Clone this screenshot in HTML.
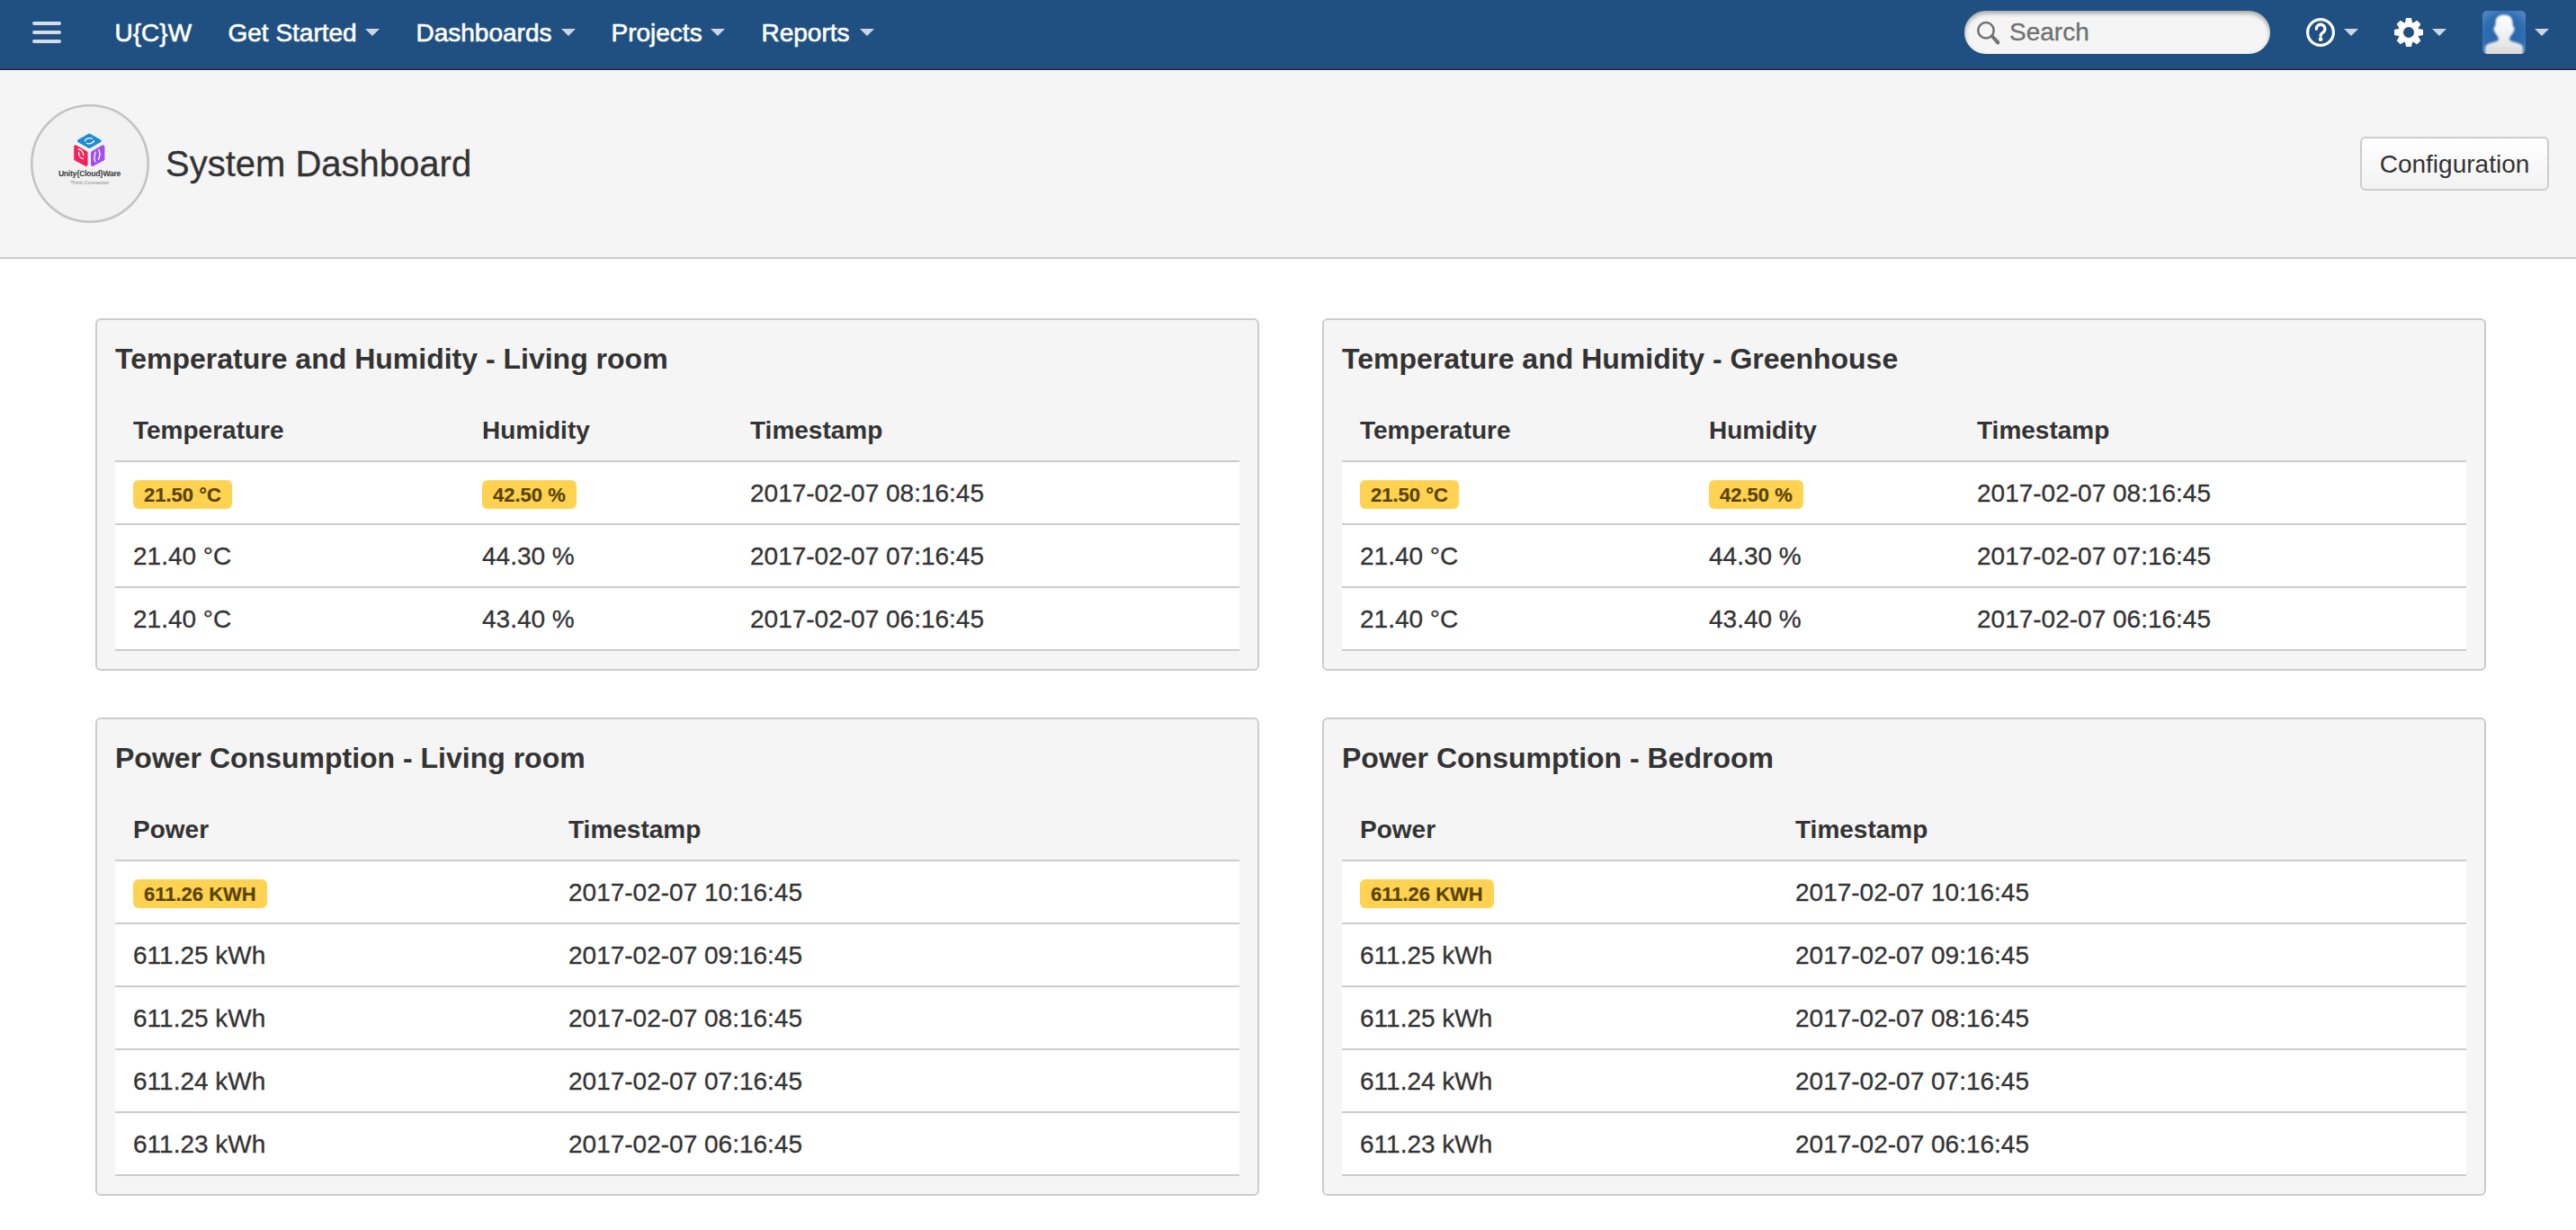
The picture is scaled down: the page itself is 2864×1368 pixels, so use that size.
<!DOCTYPE html>
<html>
<head>
<meta charset="utf-8">
<style>
html,body{margin:0;padding:0;}
body{width:2864px;height:1368px;overflow:hidden;position:relative;background:#fff;font-family:"Liberation Sans",sans-serif;color:#333;}
.abs{position:absolute;}
#hdr{position:absolute;left:0;top:0;width:2864px;height:76px;background:#205081;}
#hdrline{position:absolute;left:0;top:76px;width:2864px;height:1px;background:#2d3b53;}
#hdrline2{position:absolute;left:0;top:77px;width:2864px;height:1px;background:#1f2b45;}
.bar{position:absolute;left:36px;width:32px;height:4px;border-radius:2px;background:#d4dce6;}
.nav{position:absolute;top:17px;height:40px;line-height:40px;font-size:28px;color:#fff;white-space:nowrap;-webkit-text-stroke:0.6px #fff;}
.caret{position:absolute;top:32px;width:0;height:0;border-left:8px solid transparent;border-right:8px solid transparent;border-top:8px solid #ccd5e1;}
#search{position:absolute;left:2184px;top:12px;width:340px;height:48px;border-radius:24px;background:#f5f5f5;box-shadow:inset 0 3px 5px rgba(0,0,0,0.33);}
#stext{position:absolute;left:2234px;top:16px;height:40px;line-height:40px;font-size:28px;color:#707070;-webkit-text-stroke:0.3px #707070;}
#ph{position:absolute;left:0;top:78px;width:2864px;height:208px;background:#f5f5f5;border-top:1px solid #fff;box-sizing:border-box;}
#phb{position:absolute;left:0;top:286px;width:2864px;height:2px;background:#ccc;}
#logo{position:absolute;left:34px;top:116px;width:132px;height:132px;border-radius:50%;background:#f3f3f3;border:3px solid #c4c4c4;box-sizing:border-box;}
#h1{position:absolute;left:184px;top:157px;height:50px;line-height:50px;font-size:40px;color:#333;-webkit-text-stroke:0.3px #333;white-space:nowrap;}
#cfg{position:absolute;left:2624px;top:152px;width:210px;height:60px;box-sizing:border-box;border:2px solid #ccc;border-radius:6px;background:linear-gradient(#fff,#f2f2f2);font-size:28px;line-height:58px;text-align:center;color:#333;}
.panel{position:absolute;width:1294px;box-sizing:border-box;border:2px solid #ccc;border-radius:6px;background:#f5f5f5;}
.ptitle{position:absolute;left:20px;font-size:32px;font-weight:bold;line-height:40px;white-space:nowrap;color:#333;}
table{position:absolute;left:20px;border-collapse:separate;border-spacing:0;width:1250px;table-layout:fixed;}
th{text-align:left;font-size:28px;font-weight:bold;padding:2px 20px 0;height:66px;border-bottom:2px solid #ccc;vertical-align:middle;color:#333;}
td{-webkit-text-stroke:0.3px #333;font-size:28px;padding:2px 20px 0;height:66px;border-bottom:2px solid #ccc;background:#fff;vertical-align:middle;white-space:nowrap;color:#333;}
.loz{display:inline-block;position:relative;top:0px;height:32px;line-height:34px;box-sizing:border-box;overflow:visible;padding:0 12px;border-radius:6px;background:#ffd351;color:#594300;font-size:22px;font-weight:bold;-webkit-text-stroke:0.2px #594300;}
</style>
</head>
<body>
<div id="hdr"></div>
<div id="hdrline"></div>
<div id="hdrline2"></div>
<div class="bar" style="top:24px"></div>
<div class="bar" style="top:34px"></div>
<div class="bar" style="top:44px"></div>
<div class="nav" style="left:127.5px">U{C}W</div>
<div class="nav" style="left:253.5px">Get Started</div>
<div class="caret" style="left:406px"></div>
<div class="nav" style="left:462.5px">Dashboards</div>
<div class="caret" style="left:624px"></div>
<div class="nav" style="left:679.5px">Projects</div>
<div class="caret" style="left:790px"></div>
<div class="nav" style="left:846.5px">Reports</div>
<div class="caret" style="left:956px"></div>

<div id="search"></div>
<svg class="abs" style="left:2184px;top:12px" width="60" height="48" viewBox="0 0 60 48">
  <defs><filter id="mgb" x="-20%" y="-20%" width="140%" height="140%"><feGaussianBlur stdDeviation="0.35"/></filter></defs>
  <g filter="url(#mgb)">
  <circle cx="24" cy="21.8" r="8.7" fill="none" stroke="#717171" stroke-width="2.5"/>
  <path d="M29.6 28.6 L31.2 27 L38.6 34.4 Q39 36.6 36.8 37 Z" fill="#717171" stroke="#717171" stroke-width="1.2" stroke-linejoin="round"/>
  </g>
</svg>
<div id="stext">Search</div>

<svg class="abs" style="left:2564px;top:20px" width="32" height="32" viewBox="0 0 32 32">
  <circle cx="16" cy="16" r="14.4" fill="none" stroke="#fff" stroke-width="3.2"/>
  <path d="M11.3 12.2 A4.8 4.8 0 1 1 19.6 15.4 C18.2 16.8 16.1 17.6 16.1 19.2 L16.1 19.8" fill="none" stroke="#fff" stroke-width="3.3" stroke-linecap="round"/>
  <circle cx="16.1" cy="23.7" r="2.35" fill="#fff"/>
</svg>
<div class="caret" style="left:2606px"></div>
<svg class="abs" style="left:2662px;top:20px" width="32" height="32" viewBox="0 0 32 32">
  <path fill="#fff" fill-rule="evenodd" d="M11.70 5.66 L13.10 0.00 L18.90 0.00 L20.30 5.66 L20.27 5.65 L25.26 2.64 L29.36 6.74 L26.35 11.73 L26.34 11.70 L32.00 13.10 L32.00 18.90 L26.34 20.30 L26.35 20.27 L29.36 25.26 L25.26 29.36 L20.27 26.35 L20.30 26.34 L18.90 32.00 L13.10 32.00 L11.70 26.34 L11.73 26.35 L6.74 29.36 L2.64 25.26 L5.65 20.27 L5.66 20.30 L0.00 18.90 L0.00 13.10 L5.66 11.70 L5.65 11.73 L2.64 6.74 L6.74 2.64 L11.73 5.65 Z M16 10 A6 6 0 1 0 16 22 A6 6 0 1 0 16 10 Z"/>
</svg>
<div class="caret" style="left:2704px"></div>
<svg class="abs" style="left:2760px;top:12px" width="48" height="48" viewBox="0 0 48 48">
  <defs>
    <radialGradient id="avbg" cx="50%" cy="55%" r="65%">
      <stop offset="0" stop-color="#2560a6"/>
      <stop offset="0.7" stop-color="#2f6cb0"/>
      <stop offset="1" stop-color="#4a85c2"/>
    </radialGradient>
    <linearGradient id="avfg" x1="0" y1="0" x2="0" y2="1">
      <stop offset="0" stop-color="#ffffff"/>
      <stop offset="0.6" stop-color="#eeeeee"/>
      <stop offset="1" stop-color="#d6d6d6"/>
    </linearGradient>
    <filter id="avblur" x="-20%" y="-20%" width="140%" height="140%"><feGaussianBlur stdDeviation="0.9"/></filter>
    <clipPath id="avclip"><rect x="0" y="0" width="48" height="48" rx="5" ry="5"/></clipPath>
  </defs>
  <g clip-path="url(#avclip)">
    <rect x="0" y="0" width="48" height="48" fill="url(#avbg)"/>
    <path filter="url(#avblur)" fill="url(#avfg)" d="M24 4.5 C30 4.5 33 7 33.3 12 L33.8 17 C35.8 18 36.2 21 34.6 23.2 C32.8 26.8 30.6 28.4 30 31 C30 33.2 32 34 37 35.2 C43 36.6 45 38.5 45 42 L45 50 L3 50 L3 42 C3 38.5 5 36.6 11 35.2 C16 34 18 33.2 18 31 C17.4 28.4 15.2 26.8 13.4 23.2 C11.8 21 12.2 18 14.2 17 L14.7 12 C15 7 18 4.5 24 4.5 Z"/>
    
  </g>
</svg>
<div class="caret" style="left:2818px"></div>

<div id="ph"></div>
<div id="phb"></div>
<svg class="abs" style="left:34px;top:116px" width="132" height="132" viewBox="0 0 132 132">
  <circle cx="66" cy="66" r="64.7" fill="#f2f2f2" stroke="#c4c4c4" stroke-width="2.6"/>
  <g stroke-linejoin="round">
    <path d="M53.8 40.8 L65.3 34.3 L76.8 40.8 L65.3 47.3 Z" fill="#1e8bd5" stroke="#1e8bd5" stroke-width="3.6"/>
    <path d="M50 47 L61.8 53.8 L61.8 67.2 L50 61 Z" fill="#f0245a" stroke="#f0245a" stroke-width="3.6"/>
    <path d="M80.6 47 L68.8 53.8 L68.8 67.2 L80.6 61 Z" fill="#a14ef0" stroke="#a14ef0" stroke-width="3.6"/>
  </g>
  <g fill="none" stroke="#fff" stroke-width="1.3" stroke-linecap="round">
    <path d="M60.5 40.8 C61 38 66 37 68.5 38"/>
    <path d="M70.5 40.5 C70 43 65 44.5 62.5 43.5"/>
    <path d="M53.2 50 C56 50 58.5 53 58.8 56.5"/>
    <path d="M53.5 53.5 C53.5 57 55.5 60 58.2 60.5"/>
    <path d="M72.2 53 C71 55 71.5 58 70.8 60.5 C71.5 62 71.5 63.5 72.2 64"/>
    <path d="M75.8 50.5 C76.5 52 76.5 54 77.2 55.5 C76.5 57 76.5 59.5 75.5 61.5"/>
  </g>
  <text x="65.5" y="80" text-anchor="middle" font-family="Liberation Sans" font-weight="bold" font-size="8.6" fill="#3a3a3a" letter-spacing="-0.25">Unity{Cloud}Ware</text>
  <text x="65.5" y="88.6" text-anchor="middle" font-family="Liberation Sans" font-size="5.6" fill="#8a8a8a">Think Connected</text>
</svg>
<div id="h1">System Dashboard</div>
<div id="cfg">Configuration</div>

<!-- panels -->
<div class="panel" style="left:106px;top:354px;height:392px;">
  <div class="ptitle" style="top:23px">Temperature and Humidity - Living room</div>
  <table style="top:88px">
    <colgroup><col style="width:388px"><col style="width:298px"><col></colgroup>
    <tr><th>Temperature</th><th>Humidity</th><th>Timestamp</th></tr>
    <tr><td><span class="loz">21.50 °C</span></td><td><span class="loz">42.50 %</span></td><td>2017-02-07 08:16:45</td></tr>
    <tr><td>21.40 °C</td><td>44.30 %</td><td>2017-02-07 07:16:45</td></tr>
    <tr><td>21.40 °C</td><td>43.40 %</td><td>2017-02-07 06:16:45</td></tr>
  </table>
</div>
<div class="panel" style="left:1470px;top:354px;height:392px;">
  <div class="ptitle" style="top:23px">Temperature and Humidity - Greenhouse</div>
  <table style="top:88px">
    <colgroup><col style="width:388px"><col style="width:298px"><col></colgroup>
    <tr><th>Temperature</th><th>Humidity</th><th>Timestamp</th></tr>
    <tr><td><span class="loz">21.50 °C</span></td><td><span class="loz">42.50 %</span></td><td>2017-02-07 08:16:45</td></tr>
    <tr><td>21.40 °C</td><td>44.30 %</td><td>2017-02-07 07:16:45</td></tr>
    <tr><td>21.40 °C</td><td>43.40 %</td><td>2017-02-07 06:16:45</td></tr>
  </table>
</div>
<div class="panel" style="left:106px;top:798px;height:532px;">
  <div class="ptitle" style="top:23px">Power Consumption - Living room</div>
  <table style="top:88px">
    <colgroup><col style="width:484px"><col></colgroup>
    <tr><th>Power</th><th>Timestamp</th></tr>
    <tr><td><span class="loz">611.26 KWH</span></td><td>2017-02-07 10:16:45</td></tr>
    <tr><td>611.25 kWh</td><td>2017-02-07 09:16:45</td></tr>
    <tr><td>611.25 kWh</td><td>2017-02-07 08:16:45</td></tr>
    <tr><td>611.24 kWh</td><td>2017-02-07 07:16:45</td></tr>
    <tr><td>611.23 kWh</td><td>2017-02-07 06:16:45</td></tr>
  </table>
</div>
<div class="panel" style="left:1470px;top:798px;height:532px;">
  <div class="ptitle" style="top:23px">Power Consumption - Bedroom</div>
  <table style="top:88px">
    <colgroup><col style="width:484px"><col></colgroup>
    <tr><th>Power</th><th>Timestamp</th></tr>
    <tr><td><span class="loz">611.26 KWH</span></td><td>2017-02-07 10:16:45</td></tr>
    <tr><td>611.25 kWh</td><td>2017-02-07 09:16:45</td></tr>
    <tr><td>611.25 kWh</td><td>2017-02-07 08:16:45</td></tr>
    <tr><td>611.24 kWh</td><td>2017-02-07 07:16:45</td></tr>
    <tr><td>611.23 kWh</td><td>2017-02-07 06:16:45</td></tr>
  </table>
</div>
</body>
</html>
